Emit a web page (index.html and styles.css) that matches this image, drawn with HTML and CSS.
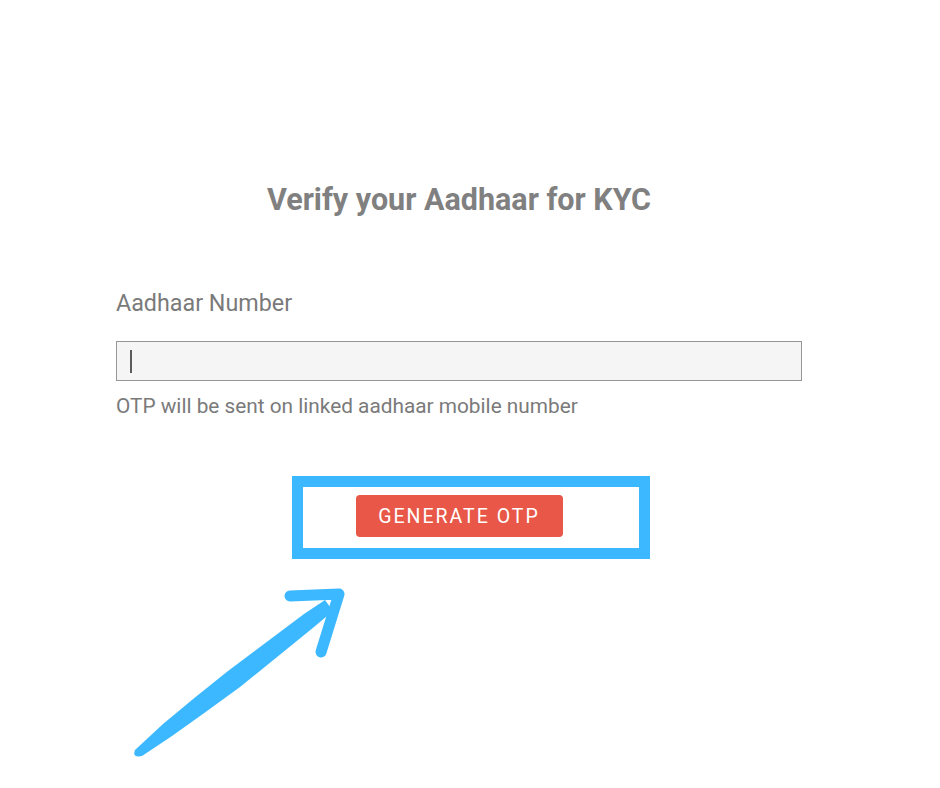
FILE: index.html
```html
<!DOCTYPE html>
<html lang="en">

<head>
    <meta charset="UTF-8">
    <meta name="viewport" content="width=device-width, initial-scale=1.0">
    <title>Verify your Aadhaar for KYC</title>

    <link rel="stylesheet" href="styles.css">
</head>

<body>
    <div class="screen">
        <div class="kyc">
            <h1 class="title">Verify your Aadhaar for KYC</h1>

            <label class="label" for="aadhaar">Aadhaar Number</label>
            <div class="field" id="aadhaar">
                <span class="caret"></span>
            </div>
            <p class="hint">OTP will be sent on linked aadhaar mobile number</p>

            <div class="actions">
                <div class="btn-wrap">
                    <button class="otp-btn">Generate OTP</button>
                    <span class="highlight-box"></span>
                </div>
            </div>
        </div>

        <!-- hand drawn pointer -->
        <svg class="pointer" width="940" height="788" viewBox="0 0 940 788">
            <path d="M135 750 L163 724 Q195 697 228 671 L304 614 L325 600 L333 611 L314 627 L240 687 Q206 712 172 736 L142 756 Q132 758 135 750 Z" fill="#3bb8ff" />
            <path d="M290 596 L339 594 L321 652" fill="none" stroke="#3bb8ff" stroke-width="11" stroke-linecap="round" stroke-linejoin="round" />
        </svg>
    </div>
</body>

</html>
```

FILE: styles.css
```css
* {
    margin: 0;
    padding: 0;
    box-sizing: border-box;
}

body {
    background: #fff;
    font-family: Roboto, "Liberation Sans", sans-serif;
}

.screen {
    position: relative;
    width: 940px;
    height: 788px;
    overflow: hidden;
}

.kyc {
    width: 686px;
    margin-left: 116px;
    padding-top: 182px;
}

.title {
    font-size: 30.5px;
    line-height: 36px;
    font-weight: 700;
    color: #808080;
    text-align: center;
}

.label {
    display: block;
    margin-top: 71px;
    font-size: 23.3px;
    line-height: 28px;
    color: #7a7a7a;
}

.field {
    margin-top: 24px;
    height: 40px;
    border: 1px solid #969696;
    background: #f5f5f5;
    padding: 8px 0 0 13px;
}

.caret {
    display: block;
    width: 2px;
    height: 23px;
    background: #5c5c5c;
}

.hint {
    margin-top: 13px;
    font-size: 20.8px;
    line-height: 24px;
    color: #7a7a7a;
}

.actions {
    margin-top: 77px;
    text-align: center;
}

.btn-wrap {
    position: relative;
    display: inline-block;
}

.otp-btn {
    display: block;
    width: 207px;
    height: 42px;
    border: none;
    border-radius: 4px;
    background: #e85747;
    color: #fff;
    font-family: Roboto, "Liberation Sans", sans-serif;
    font-size: 19.5px;
    font-weight: 400;
    letter-spacing: 2px;
    text-transform: uppercase;
}

.highlight-box {
    position: absolute;
    left: -64px;
    right: -87px;
    top: -19px;
    bottom: -22px;
    border: 11px solid #3bb8ff;
}

.pointer {
    position: absolute;
    left: 0;
    top: 0;
}
```
